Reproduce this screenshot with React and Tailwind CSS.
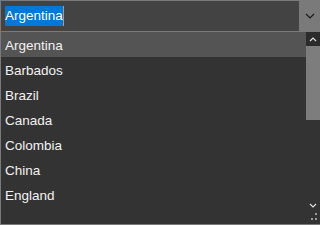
import React from "react";

const items = ["Argentina", "Barbados", "Brazil", "Canada", "Colombia", "China", "England"];

export default function App() {
  return (
    <div className="w-[320px] h-[225px] bg-[#7a7a7a] flex flex-col overflow-hidden" style={{ fontFamily: '"Liberation Sans", Arial, sans-serif' }}>
      <div className="h-[32px] flex shrink-0">
        <div className="flex-1 ml-px mt-px mb-px bg-[#434343] flex items-center pl-[4px]">
          <span className="bg-[#0078d7] text-white text-[13.5px] leading-[20px] h-[20px] flex items-center border-r border-[#e38a3a]">Argentina</span>
        </div>
        <div className="w-[21px] flex items-center justify-center bg-[#7a7a7a]">
          <svg width="10" height="6" viewBox="0 0 10 6"><path d="M1 1 L5 5 L9 1" stroke="#1a1a1a" strokeWidth="1.2" fill="none" /></svg>
        </div>
      </div>
      <div className="flex-1 flex ml-px mb-px">
        <div className="flex-1 bg-[#333333] flex flex-col overflow-hidden">
          {items.map((it, i) => (
            <div key={it} className={`h-[25px] shrink-0 flex items-center pl-[4px] pt-[3px] text-[13.5px] text-[#f2f2f2] ${i === 0 ? "bg-[#545454]" : ""}`}>{it}</div>
          ))}
        </div>
        <div className="w-[14px] bg-[#333333] flex flex-col relative">
          <div className="h-[14px] bg-[#2b2b2b] flex items-center justify-center">
            <svg width="8" height="5" viewBox="0 0 8 5"><path d="M1 4 L4 1 L7 4" stroke="#e0e0e0" strokeWidth="1.2" fill="none" /></svg>
          </div>
          <div className="h-[74px] bg-[#7d7d7d]" />
          <div className="flex-1" />
          <div className="h-[14px] flex items-center justify-center">
            <svg width="8" height="5" viewBox="0 0 8 5"><path d="M1 1 L4 4 L7 1" stroke="#e0e0e0" strokeWidth="1.2" fill="none" /></svg>
          </div>
          <div className="h-[12px]" />
          <svg className="absolute right-[2px] bottom-[3px]" width="8" height="8" viewBox="0 0 8 8">
            <rect x="5" y="0" width="2" height="2" fill="#999" />
            <rect x="1" y="5" width="2" height="2" fill="#999" />
            <rect x="5" y="5" width="2" height="2" fill="#999" />
          </svg>
        </div>
      </div>
    </div>
  );
}
